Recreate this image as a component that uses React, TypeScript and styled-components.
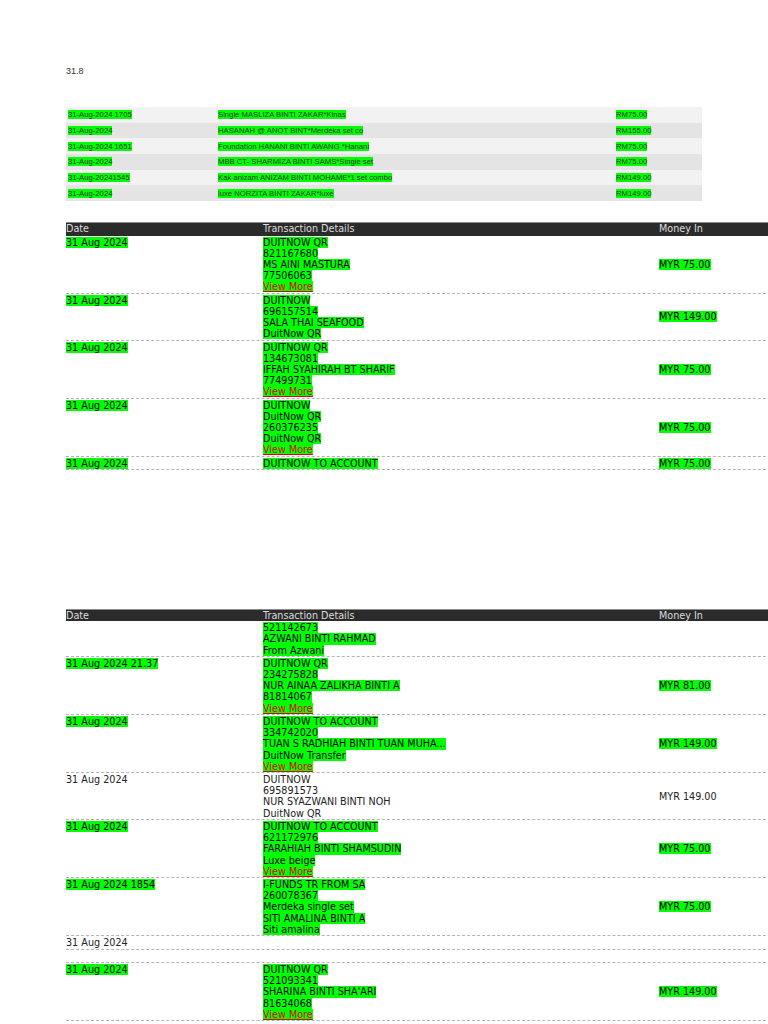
import React from "react";
import styled, { createGlobalStyle } from "styled-components";

const Global = createGlobalStyle`
  html, body { margin: 0; padding: 0; background: #fff; overflow: hidden; }
  body { width: 768px; }
`;

const Page = styled.div`
  padding: 66px 0 0 66px;
  font-family: "DejaVu Sans", sans-serif;
  color: #222;
`;

const Title = styled.div`
  font-family: "Liberation Sans", Arial, sans-serif;
  font-size: 9px;
  line-height: 11px;
  color: #333;
  height: 11px;
`;

const Summary = styled.div`
  margin-top: 30px;
  width: 636px;
  font-family: "Liberation Sans", Arial, sans-serif;
  font-size: 7.7px;
  color: #333;
`;

const SumRow = styled.div<{ $shade: boolean }>`
  display: grid;
  grid-template-columns: 150px 398px 1fr;
  align-items: center;
  height: 15.7px;
  padding-left: 2px;
  background: ${(p) => (p.$shade ? "#e4e4e4" : "#f2f2f2")};
`;

const SumMark = styled.span`
  justify-self: start;
  background: #00ff00;
  line-height: 9px;
`;

const Table = styled.div<{ $top: number }>`
  margin-top: ${(p) => p.$top}px;
  width: 740px;
  font-size: 9.65px;
`;

const Head = styled.div<{ $h: number }>`
  display: grid;
  grid-template-columns: 197px 396px 1fr;
  background: #2b2b2b;
  border-top: 1px solid #8a8a8a;
  color: #dcdcdc;
  line-height: ${(p) => p.$h}px;
`;

const HeadCell = styled.div``;

const Row = styled.div`
  display: grid;
  grid-template-columns: 197px 396px 1fr;
  padding: 1px 0 0.3px;
  border-bottom: 1px dashed #b4b4b4;
  line-height: 11.15px;
  min-height: 11.15px;
`;

const DateCell = styled.div`
  align-self: start;
`;

const Details = styled.div`
  display: flex;
  flex-direction: column;
  align-items: flex-start;
`;

const MoneyCell = styled.div`
  align-self: center;
`;

const Line = styled.span<{ $hl: boolean }>`
  background: ${(p) => (p.$hl ? "#00ff00" : "transparent")};
  color: ${(p) => (p.$hl ? "#000" : "#222")};
  white-space: nowrap;
`;

const More = styled.span`
  background: #00ff00;
  color: #e00000;
  text-decoration: underline;
`;

type Tx = {
  date?: string;
  lines: string[];
  more?: boolean;
  money?: string;
  hl?: boolean;
};

const summary = [
  ["31-Aug-2024 1705", "Single MASLIZA BINTI ZAKAR*Kinas", "RM75.00"],
  ["31-Aug-2024", "HASANAH @ ANOT BINT*Merdeka set co", "RM155.00"],
  ["31-Aug-2024 1651", "Foundation HANANI BINTI AWANG *Hanani", "RM75.00"],
  ["31-Aug-2024", "MBB CT- SHARMIZA BINTI SAMS*Single set", "RM75.00"],
  ["31-Aug-20241545", "Kak anizam ANIZAM BINTI MOHAME*1 set combo", "RM149.00"],
  ["31-Aug-2024", "luxe NORZITA BINTI ZAKAR*luxe", "RM149.00"],
];

const table1: Tx[] = [
  { date: "31 Aug 2024", lines: ["DUITNOW QR", "821167680", "MS AINI MASTURA", "77506063"], more: true, money: "MYR 75.00", hl: true },
  { date: "31 Aug 2024", lines: ["DUITNOW", "696157514", "SALA THAI SEAFOOD", "DuitNow QR"], money: "MYR 149.00", hl: true },
  { date: "31 Aug 2024", lines: ["DUITNOW QR", "134673081", "IFFAH SYAHIRAH BT SHARIF", "77499731"], more: true, money: "MYR 75.00", hl: true },
  { date: "31 Aug 2024", lines: ["DUITNOW", "DuitNow QR", "260376235", "DuitNow QR"], more: true, money: "MYR 75.00", hl: true },
  { date: "31 Aug 2024", lines: ["DUITNOW TO ACCOUNT"], money: "MYR 75.00", hl: true },
];

const table2: Tx[] = [
  { lines: ["521142673", "AZWANI BINTI RAHMAD", "From Azwani"], hl: true },
  { date: "31 Aug 2024 21.37", lines: ["DUITNOW QR", "234275828", "NUR AINAA ZALIKHA BINTI A", "81814067"], more: true, money: "MYR 81.00", hl: true },
  { date: "31 Aug 2024", lines: ["DUITNOW TO ACCOUNT", "334742020", "TUAN S RADHIAH BINTI TUAN MUHA...", "DuitNow Transfer"], more: true, money: "MYR 149.00", hl: true },
  { date: "31 Aug 2024", lines: ["DUITNOW", "695891573", "NUR SYAZWANI BINTI NOH", "DuitNow QR"], money: "MYR 149.00", hl: false },
  { date: "31 Aug 2024", lines: ["DUITNOW TO ACCOUNT", "621172976", "FARAHIAH BINTI SHAMSUDIN", "Luxe beige"], more: true, money: "MYR 75.00", hl: true },
  { date: "31 Aug 2024 1854", lines: ["I-FUNDS TR FROM SA", "260078367", "Merdeka single set", "SITI AMALINA BINTI A", "Siti amalina"], money: "MYR 75.00", hl: true },
  { date: "31 Aug 2024", lines: [], hl: false },
  { date: "\u00a0", lines: [], hl: false },
  { date: "31 Aug 2024", lines: ["DUITNOW QR", "521093341", "SHARINA BINTI SHA'ARI", "81634068"], more: true, money: "MYR 149.00", hl: true },
];

function TxTable({ rows, top, head }: { rows: Tx[]; top: number; head: number }) {
  return (
    <Table $top={top}>
      <Head $h={head}>
        <HeadCell>Date</HeadCell>
        <HeadCell>Transaction Details</HeadCell>
        <HeadCell>Money In</HeadCell>
      </Head>
      {rows.map((r, i) => (
        <Row key={i}>
          <DateCell>{r.date && <Line $hl={!!r.hl && r.date.trim() !== ""}>{r.date}</Line>}</DateCell>
          <Details>
            {r.lines.map((l, j) => (
              <Line key={j} $hl={!!r.hl}>
                {l}
              </Line>
            ))}
            {r.more && <More>View More</More>}
          </Details>
          <MoneyCell>{r.money && <Line $hl={!!r.hl}>{r.money}</Line>}</MoneyCell>
        </Row>
      ))}
    </Table>
  );
}

export default function App() {
  return (
    <>
      <Global />
      <Page>
        <Title>31.8</Title>
        <Summary>
          {summary.map((s, i) => (
            <SumRow key={i} $shade={i % 2 === 1}>
              <SumMark>{s[0]}</SumMark>
              <SumMark>{s[1]}</SumMark>
              <SumMark>{s[2]}</SumMark>
            </SumRow>
          ))}
        </Summary>
        <TxTable rows={table1} top={21} head={12.5} />
        <TxTable rows={table2} top={138.5} head={11.5} />
      </Page>
    </>
  );
}
